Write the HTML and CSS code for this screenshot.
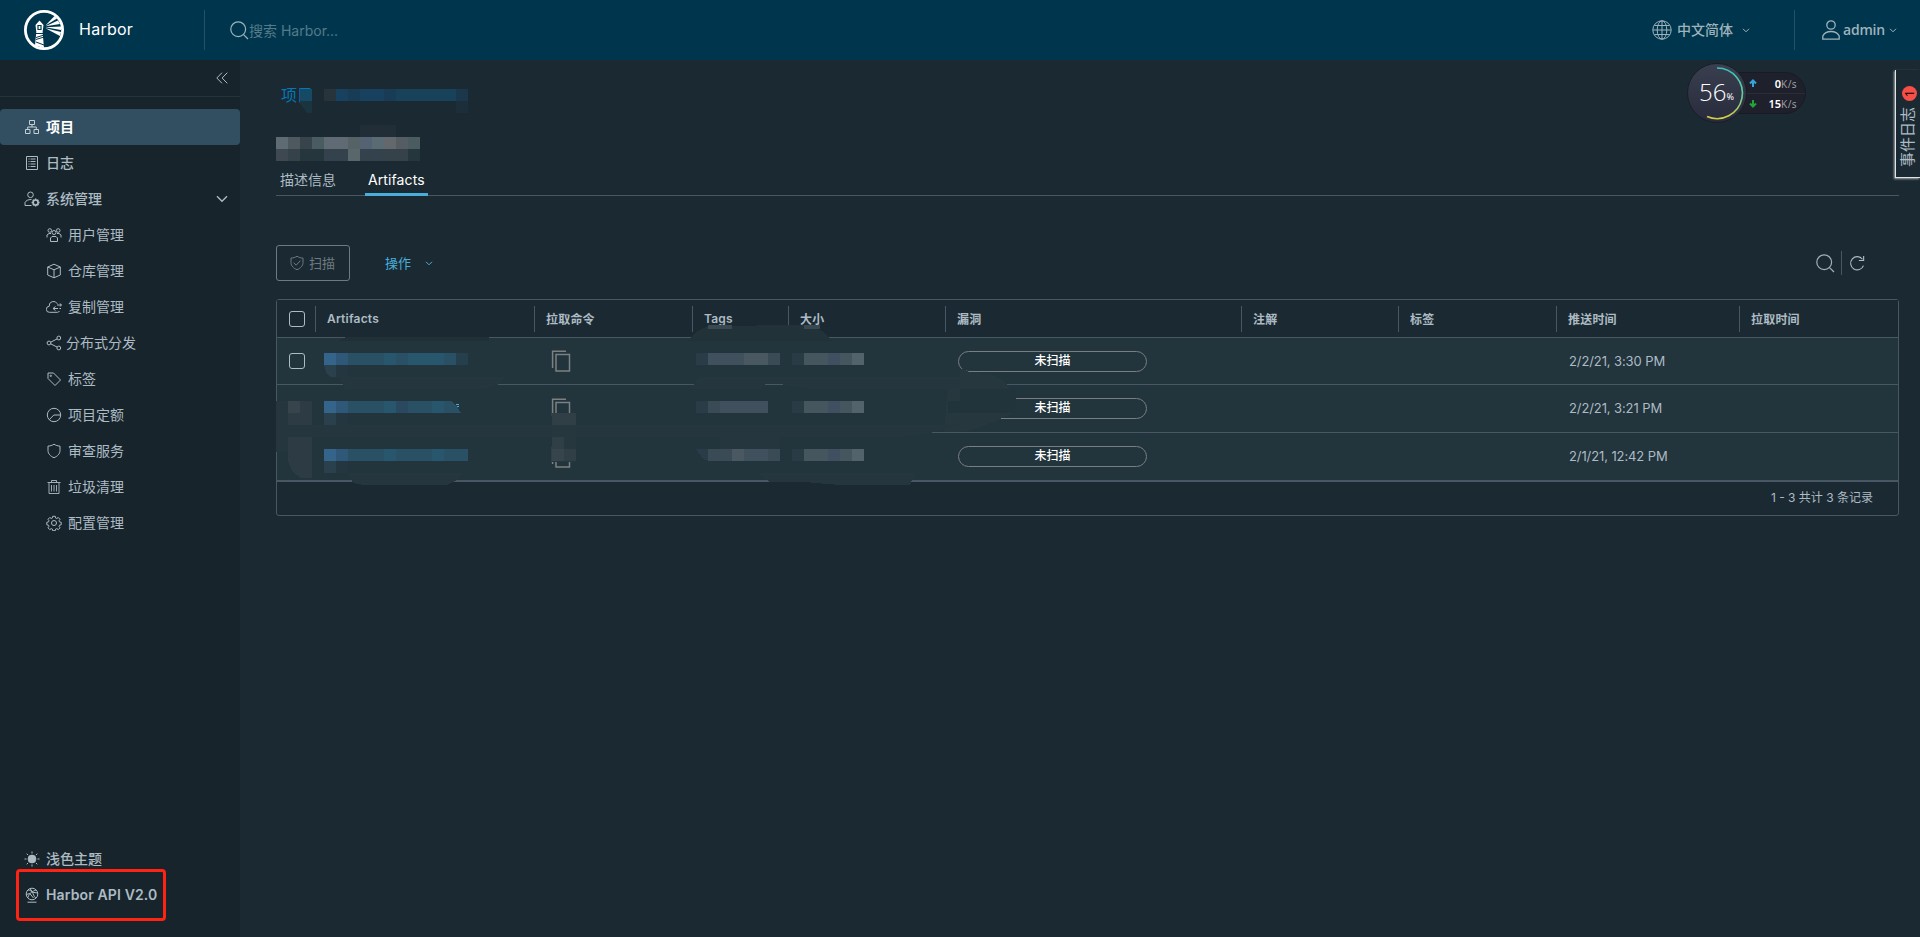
FILE: index.html
```html
<!DOCTYPE html>
<html lang="zh-CN">
<head>
    <meta charset="UTF-8">
    <meta name="viewport" content="width=device-width, initial-scale=1.0">
    <title>Harbor</title>
    <link rel="stylesheet" href="styles.css">
</head>
<body>

<!-- Header -->
<header class="header">
    <a class="brand">
        <svg class="logo" viewBox="0 0 40 40">
            <circle cx="20" cy="20" r="18.6" fill="none" stroke="#fff" stroke-width="2.8"/>
            <path d="M11.5 15 L15.5 10.5 L19.5 15 L18.6 22 L20 38 L11 35.5 L12.3 22 Z" fill="#fff"/>
            <path d="M14 15.5h3v4h-3z" fill="none" stroke="#00364d" stroke-width="1.2"/>
            <path d="M12 23.5h7.5M12 27.5l8-2.500M12 29.500l8-2.500M12 32l8 3" stroke="#00364d" stroke-width="1"/>
            <path d="M21.500 15.500 L30.500 6 L33 8.500 Z M21.500 16.300 L34 10.500 L36 14 Z M21.500 17.300 L37 16.500 L37 20 Z M21.500 18.300 L37 22 L36 26 Z" fill="#fff"/>
        </svg>
        <span class="brand-name">Harbor</span>
    </a>
    <div class="search">
        <svg class="icon-search" viewBox="0 0 19 19"><circle cx="8.200" cy="8.200" r="7.400"/><path d="M13.300 13.300l4.700 4.700"/></svg>
        <span>搜索 Harbor...</span>
    </div>
    <div class="header-actions">
        <div class="lang">
            <svg class="icon-globe" viewBox="0 0 20 20"><circle cx="10" cy="10" r="9.200"/><ellipse cx="10" cy="10" rx="4.800" ry="9.200"/><path d="M10 1v18M1 10h18M2.500 5.500h15M2.500 14.500h15"/></svg>
            <span>中文简体</span>
            <svg class="caret" viewBox="0 0 8 5"><path d="M1 .8l3 3 3-3"/></svg>
        </div>
        <div class="user">
            <svg class="icon-user" viewBox="0 0 18 20"><circle cx="9" cy="5" r="4.200"/><path d="M.8 19.200v-3.200c1.500-3 4.500-4.500 8.200-4.500s6.700 1.500 8.200 4.500v3.200z"/></svg>
            <span>admin</span>
            <svg class="caret" viewBox="0 0 8 5"><path d="M1 .8l3 3 3-3"/></svg>
        </div>
    </div>
</header>

<div class="main">
    <!-- Side navigation -->
    <nav class="sidenav">
        <div class="collapse">
            <svg viewBox="0 0 12 12"><path d="M6 .7L.8 6 6 11.300M11.300 .7L6.100 6l5.200 5.300"/></svg>
        </div>
        <ul class="nav-list">
            <li class="nav-item active">
                <svg viewBox="0 0 16 16"><path d="M5.500 1.500h5v4h-5zM1.500 10.500h4.500v4H1.500zM10 10.500h4.500v4H10zM8 5.500V8M3.700 10.500V8h8.600v2.500"/></svg>
                <span>项目</span>
            </li>
            <li class="nav-item">
                <svg viewBox="0 0 16 16"><path d="M2.500 1.500h11v13h-11zM4.500 4h1M6.500 4h5M4.500 6.500h1M6.500 6.500h5M4.500 9h1M6.500 9h5M4.500 11.500h1M6.500 11.500h5"/></svg>
                <span>日志</span>
            </li>
            <li class="nav-item">
                <svg viewBox="0 0 16 16"><circle cx="6.500" cy="3.800" r="2.800"/><path d="M7.500 14.500H1V11.500C2 9.500 4 8.500 7.500 8.500"/><circle cx="11.600" cy="11.500" r="2.500" stroke-width="1.700"/><path d="M11.600 7.500v1.500M11.600 14v1.500M7.600 11.500h1.500M14.100 11.500h1.500M8.800 8.700l1 1M13.400 13.300l1 1M14.400 8.700l-1 1M9.800 13.300l-1 1" stroke-width="1.400"/></svg>
                <span>系统管理</span>
                <svg class="expand" viewBox="0 0 12 8"><path d="M1 1.200l5 5 5-5"/></svg>
            </li>
        </ul>
        <ul class="nav-list sub">
            <li class="nav-item">
                <svg viewBox="0 0 16 16"><circle cx="8" cy="5.500" r="2"/><circle cx="3.800" cy="3.500" r="1.800"/><circle cx="12.200" cy="3.500" r="1.800"/><path d="M4.500 14.500V11L6 9.500h4l1.500 1.500v3.500zM1 10.500V8l2-1.500h2M15 10.500V8l-2-1.500h-2"/></svg>
                <span>用户管理</span>
            </li>
            <li class="nav-item">
                <svg viewBox="0 0 16 16"><path d="M8 1.200l6.300 2.800v8L8 14.800 1.700 12V4zM1.700 4L8 6.800 14.300 4M8 6.800v8"/></svg>
                <span>仓库管理</span>
            </li>
            <li class="nav-item">
                <svg viewBox="0 0 16 16"><path d="M13.500 12a2.500 2.500 0 0 1-2 1.300H3.500A3 3 0 0 1 3.200 7.300 4.300 4.300 0 0 1 11.300 4.800M7 9.500h5M9.500 7.500l-2.500 2 2.500 2M11 6h4.500M13.800 4.500L15.500 6l-1.700 1.500M13.500 9.500H15"/></svg>
                <span>复制管理</span>
            </li>
            <li class="nav-item tight">
                <svg viewBox="0 0 16 16"><circle cx="3" cy="8" r="1.900"/><circle cx="12.800" cy="3" r="1.900"/><circle cx="12.800" cy="13" r="1.900"/><path d="M4.700 7.200l6.400-3.300M4.700 8.800l6.400 3.300"/></svg>
                <span>分布式分发</span>
            </li>
            <li class="nav-item">
                <svg viewBox="0 0 16 16"><path d="M2 2h5.500l7 7L9 14.500l-7-7z"/><circle cx="4.800" cy="4.800" r=".7"/></svg>
                <span>标签</span>
            </li>
            <li class="nav-item">
                <svg viewBox="0 0 16 16"><circle cx="8" cy="8" r="6.700"/><path d="M3.300 12.700L7.800 8h6.800"/></svg>
                <span>项目定额</span>
            </li>
            <li class="nav-item">
                <svg viewBox="0 0 16 16"><path d="M8 1.200c1.800 1.200 3.800 1.800 6 1.900v4.400c0 3.300-2.500 5.800-6 7.200-3.500-1.400-6-3.900-6-7.200V3.100c2.200-.1 4.200-.7 6-1.900z"/></svg>
                <span>审查服务</span>
            </li>
            <li class="nav-item">
                <svg viewBox="0 0 16 16"><path d="M1.500 3.500h13M5.500 3.500v-2h5v2M3 4v10.500h10V4M5.500 6v6.500M8 6v6.500M10.500 6v6.500" stroke-width=".9"/></svg>
                <span>垃圾清理</span>
            </li>
            <li class="nav-item">
                <svg viewBox="0 0 16 16"><circle cx="8" cy="8" r="2.500"/><path d="M6.700 1.300h2.600l.4 1.800 1 .4 1.600-1 1.700 1.800-1 1.500.5 1.100 1.700.4v2.500l-1.700.4-.5 1 1 1.600-1.700 1.800-1.600-1-1 .4-.4 1.700H6.700l-.4-1.700-1-.4-1.600 1L2 12.800l1-1.600-.5-1-1.700-.4V7.300l1.700-.4.5-1.100-1-1.500 1.700-1.800 1.600 1 1-.4z"/></svg>
                <span>配置管理</span>
            </li>
        </ul>
        <ul class="nav-list nav-footer">
            <li class="nav-item">
                <svg viewBox="0 0 16 16"><circle cx="8" cy="8" r="3.900" fill="#adbbc4"/><path d="M8 .5v2M8 13.500v2M.5 8h2M13.500 8h2M2.700 2.700l1.400 1.400M11.900 11.900l1.400 1.400M13.300 2.700l-1.400 1.400M4.100 11.900l-1.400 1.400"/></svg>
                <span>浅色主题</span>
            </li>
            <li class="nav-item api">
                <svg viewBox="0 0 16 16"><circle cx="8" cy="7" r="5.800"/><path d="M4 3c2 0 4 1 5 3.500S11 11 12 11M12 3C9 4 5 6 4 10.500M2.300 7.500l3.500-1 3.700 4.500M6 1.800l3 3.500 4.700.7M3.500 15.200h9"/></svg>
                <span>Harbor API V2.0</span>
            </li>
        </ul>
    </nav>

    <!-- Content -->
    <main class="content">
        <div class="breadcrumb">项目</div>
        <div class="tabs">
            <span class="tab">描述信息</span>
            <span class="tab selected">Artifacts</span>
        </div>

        <div class="toolbar">
            <button class="btn-scan" disabled>
                <svg viewBox="0 0 16 16"><path d="M8 1.200c1.800 1.200 3.800 1.800 6 1.900v4.400c0 3.300-2.500 5.800-6 7.200-3.500-1.400-6-3.900-6-7.200V3.100c2.200-.1 4.200-.7 6-1.900zM4.700 7.700l2.400 2.500 4.300-4.500"/></svg>
                <span>扫描</span>
            </button>
            <div class="actions">
                <span>操作</span>
                <svg class="caret" viewBox="0 0 8 5"><path d="M1 .8l3 3 3-3"/></svg>
            </div>
            <div class="tools">
                <svg class="icon-search" viewBox="0 0 19 19"><circle cx="8.200" cy="8.200" r="7.400"/><path d="M13.300 13.300l4.700 4.700"/></svg>
                <svg class="icon-refresh" viewBox="0 0 18 18"><path d="M15.300 11.200A7 7 0 1 1 14.300 4.500M10.500 5.800h5V1"/></svg>
            </div>
        </div>

        <div class="datagrid">
            <div class="row head">
                <div class="cell check"><i class="box"></i></div>
                <div class="cell">Artifacts</div>
                <div class="cell">拉取命令</div>
                <div class="cell">Tags</div>
                <div class="cell">大小</div>
                <div class="cell">漏洞</div>
                <div class="cell">注解</div>
                <div class="cell">标签</div>
                <div class="cell">推送时间</div>
                <div class="cell">拉取时间</div>
            </div>
            <div class="row">
                <div class="cell check"><i class="box"></i></div>
                <div class="cell"></div>
                <div class="cell"><svg class="icon-copy" viewBox="0 0 20 22"><path d="M1.600 18V1.200H15M5 4.500h13.500v16.500H5z"/></svg></div>
                <div class="cell"></div>
                <div class="cell"></div>
                <div class="cell"><span class="scan-state">未扫描</span></div>
                <div class="cell"></div>
                <div class="cell"></div>
                <div class="cell date">2/2/21, 3:30 PM</div>
                <div class="cell"></div>
            </div>
            <div class="row">
                <div class="cell check"><i class="box"></i></div>
                <div class="cell"></div>
                <div class="cell"><svg class="icon-copy" viewBox="0 0 20 22"><path d="M1.600 18V1.200H15M5 4.500h13.500v16.500H5z"/></svg></div>
                <div class="cell"></div>
                <div class="cell"></div>
                <div class="cell"><span class="scan-state">未扫描</span></div>
                <div class="cell"></div>
                <div class="cell"></div>
                <div class="cell date">2/2/21, 3:21 PM</div>
                <div class="cell"></div>
            </div>
            <div class="row">
                <div class="cell check"><i class="box"></i></div>
                <div class="cell"></div>
                <div class="cell"><svg class="icon-copy" viewBox="0 0 20 22"><path d="M1.600 18V1.200H15M5 4.500h13.500v16.500H5z"/></svg></div>
                <div class="cell"></div>
                <div class="cell"></div>
                <div class="cell"><span class="scan-state">未扫描</span></div>
                <div class="cell"></div>
                <div class="cell"></div>
                <div class="cell date">2/1/21, 12:42 PM</div>
                <div class="cell"></div>
            </div>
            <div class="grid-footer">1 - 3 共计 3 条记录</div>
        </div>
    </main>
</div>

<!-- Mosaic brush over private values -->
<svg class="mosaic" viewBox="0 0 1920 937" shape-rendering="crispEdges">
    <!-- breadcrumb -->
    <path d="M300 89h12v24h-5l-7-11z" fill="#164a64"/>
    <path d="M300 101h12v12h-5l-7-10z" fill="#1a3440"/>
    <path d="M324 89h12v12h-12z" fill="#27343c"/>
    <path d="M336 89h12v12h-12zM360 89h24v12h-24z" fill="#18405f"/>
    <path d="M348 89h12v12h-12zM384 89h12v12h-12z" fill="#193c56"/>
    <path d="M396 89h60v12h-60z" fill="#18415a"/>
    <path d="M456 89h12v12h-12z" fill="#1b374b"/>
    <path d="M456 101h12v12h-12z" fill="#1d2e3b"/>
    <!-- title -->
    <path d="M360 125h36v12h-36z" fill="#212e38"/>
    <path d="M276 137h12v12h-12z" fill="#5f6b73"/>
    <path d="M288 137h12v12h-12z" fill="#4d585f"/>
    <path d="M300 137h12v12h-12z" fill="#38444c"/>
    <path d="M312 137h12v12h-12zM408 137h12v12h-12z" fill="#4b5c61"/>
    <path d="M324 137h24v12h-24z" fill="#606a74"/>
    <path d="M348 137h12v12h-12z" fill="#556266"/>
    <path d="M360 137h12v12h-12z" fill="#556274"/>
    <path d="M372 137h12v12h-12z" fill="#5a6b73"/>
    <path d="M384 137h12v12h-12z" fill="#62686b"/>
    <path d="M396 137h12v12h-12z" fill="#555d63"/>
    <path d="M276 149h12v12h-12z" fill="#3d4850"/>
    <path d="M288 149h12v12h-12zM384 149h24v12h-24z" fill="#36424a"/>
    <path d="M300 149h24v12h-24zM408 149h12v12h-12z" fill="#25363c"/>
    <path d="M324 149h24v12h-24zM360 149h24v12h-24z" fill="#33424d"/>
    <path d="M348 149h12v12h-12z" fill="#59666a"/>

    <!-- smudges between rows -->
    <path d="M346 337h143v4H338z" fill="#213037"/>
    <path d="M340 377h165l-8 8-14 4H345z" fill="#25363e"/>
    <path d="M688 341l8-9 12-6h24l50-1h24l16 6 10 10z" fill="#213238"/>
    <path d="M708 325h24v4h-24zM804 325h16v4h-16z" fill="#3a4852"/>
    <path d="M690 389l10-12h260v12H810l-30-5H765l-5 5z" fill="#25363e"/>
    <path d="M948 389h12v-21l12 5 18 1 14 7 8 11 4 12-4 9-16 8-24 9-16 2h-12z" fill="#26373e"/>
    <path d="M948 401h12v-12h56v24h-68z" fill="#22343b"/>
    <path d="M276 401h12v24h672l-30 8-30 4H288v15h-12z" fill="#25363e"/>
    <path d="M288 401h24v77h-11l-9-7-4-10z" fill="#2d3c44"/>
    <path d="M288 401h12v12h-12z" fill="#38444c"/>
    <path d="M288 425h24v12h-24z" fill="#25363e"/>
    <path d="M348 473h114l-5 7-10 5h-84l-10-2z" fill="#25363e"/>
    <path d="M758 473h157l-5 12H840l-35-3h-35z" fill="#26363e"/>

    <!-- artifact digests -->
    <path d="M324 353h12v12h-12zM324 401h12v12h-12zM324 449h12v12h-12z" fill="#34648a"/>
    <path d="M336 353h12v12h-12zM336 401h12v12h-12zM336 449h12v12h-12z" fill="#2f5878"/>
    <path d="M348 353h108v12H348zM348 401h103l5 4 5 8H348zM348 449h120v12H348z" fill="#295065"/>
    <path d="M384 353h12v12h-12zM408 353h36v12h-36zM384 401h12v12h-12zM432 401h12v12h-12zM384 449h12v12h-12zM432 449h12v12h-12z" fill="#28566c"/>
    <path d="M456 353h12v12h-12z" fill="#25404c"/>
    <path d="M396 401h12v12h-12z" fill="#2a4860"/>
    <path d="M456 404h3v1h-3zM457 406h2v1h-2z" fill="#49afd9"/>
    <path d="M324 365h12v12h-6l-4-5zM324 413h12v12h-12zM324 461h12v12h-12z" fill="#2a414d"/>
    <path d="M336 365h12v12h-12zM336 413h12v12h-12zM336 461h12v12h-12z" fill="#243741"/>

    <!-- copy icons -->
    <path d="M552 413h24v49h-24z" fill="#26373e"/>
    <path d="M552 413h24v12h-24zM552 437h12v12h-12zM564 449h12v12h-12z" fill="#303e45"/>
    <path d="M552 449h12v12h-12z" fill="#38444b"/>

    <!-- tags -->
    <path d="M696 353h12v12h-12zM696 401h12v12h-12zM696 449h12v12l-5-2z" fill="#293c48"/>
    <path d="M708 353h60v12h-60zM708 401h60v12h-60zM708 449h72v12h-72z" fill="#41505d"/>
    <path d="M744 353h24v12h-24zM732 449h12v12h-12z" fill="#4a5861"/>
    <path d="M768 353h12v12h-12zM708 401h12v12h-12zM708 449h24v12h-24zM768 449h12v12h-12z" fill="#3a4b55"/>
    <path d="M720 437h60v12h-60z" fill="#25363f"/>

    <!-- sizes -->
    <path d="M792 353h12v12h-12zM792 401h12v12h-12zM792 449h12v12h-12z" fill="#293c46"/>
    <path d="M804 353h48v12h-48zM804 401h48v12h-48zM804 449h48v12h-48z" fill="#46565f"/>
    <path d="M828 353h12v12h-12zM828 401h12v12h-12zM828 449h12v12h-12z" fill="#415061"/>
    <path d="M852 353h12v12h-12zM852 401h12v12h-12zM852 449h12v12h-12z" fill="#52636b"/>
</svg>

<!-- Floating network monitor -->
<div class="monitor">
    <div class="speeds">
        <div class="speed"><svg class="up" viewBox="0 0 8 8"><path d="M4 8V1.500M1 4.500l3-3 3 3"/></svg><b>0</b><small>K/s</small></div>
        <div class="speed"><svg class="down" viewBox="0 0 8 8"><path d="M4 0v6.500M1 3.500l3 3 3-3"/></svg><b>15</b><small>K/s</small></div>
    </div>
    <div class="gauge">
        <svg class="ring" viewBox="0 0 60 60">
            <defs>
                <linearGradient id="ringColor" x1="0" y1="0" x2="0" y2="1">
                    <stop offset="0" stop-color="#39c5bb"/>
                    <stop offset=".55" stop-color="#65cf9a"/>
                    <stop offset="1" stop-color="#d5cf42"/>
                </linearGradient>
            </defs>
            <path d="M30 5a25.300 25.300 0 1 1-10 48.500" fill="none" stroke="url(#ringColor)" stroke-width="1.600"/>
        </svg>
        <span class="percent">56</span><span class="sign">%</span>
    </div>
</div>

<!-- Event log tab -->
<div class="event-log">
    <span class="event-text">事件日志</span>
    <span class="event-badge">1</span>
</div>

<div class="api-mark"></div>

</body>
</html>
```
FILE: styles.css
```css
* {
    box-sizing: border-box;
    margin: 0;
    padding: 0;
}

body {
    height: 937px;
    overflow: hidden;
    display: flex;
    flex-direction: column;
    background: #1b2a32;
    color: #adbbc4;
    font-family: Inter, "Noto Sans CJK SC", sans-serif;
    font-size: 14px;
}

svg {
    flex: none;
    fill: none;
    stroke: currentColor;
}

/* Header */
.header {
    height: 60px;
    display: flex;
    align-items: center;
    background: #00364d;
}

.brand {
    width: 205px;
    height: 40px;
    padding-left: 24px;
    display: flex;
    align-items: center;
    gap: 15px;
    border-right: 1px solid #24506a;
    color: #fff;
}

.logo {
    width: 40px;
    height: 40px;
    stroke: none;
}

.brand-name {
    font-size: 16px;
    letter-spacing: .25px;
    line-height: 38px;
    margin-bottom: 2px;
}

.search {
    flex: 1;
    padding-left: 25px;
    display: flex;
    align-items: center;
    color: #557a8a;
}

.icon-search {
    width: 19px;
    height: 19px;
    stroke-width: 1.2;
    color: #9fb2bc;
}

.header-actions {
    display: flex;
    align-items: center;
    color: #9fb2bc;
}

.header-actions span {
    padding-bottom: 2px;
}

.lang {
    width: 143px;
    height: 40px;
    display: flex;
    align-items: center;
    border-right: 1px solid #24506a;
    font-weight: 500;
}

.icon-globe {
    width: 20px;
    height: 20px;
    margin-right: 5px;
}

.lang .caret {
    margin-left: 9px;
}

.caret {
    width: 8px;
    height: 5px;
}

.user {
    padding: 0 25px 0 27px;
    display: flex;
    align-items: center;
    font-family: "Open Sans", sans-serif;
    font-weight: 600;
}

.user span {
    letter-spacing: -.2px;
}

.icon-user {
    width: 18px;
    height: 20px;
    margin-right: 3px;
    stroke-width: 1.300;
}

.user .caret {
    margin-left: 4px;
    margin-right: -2px;
}

/* Side navigation */
.main {
    flex: 1;
    display: flex;
}

.sidenav {
    width: 240px;
    display: flex;
    flex-direction: column;
    background: #17242b;
}

.collapse {
    height: 37px;
    padding-right: 12px;
    display: flex;
    align-items: center;
    justify-content: flex-end;
    border-bottom: 1px solid #25333a;
}

.collapse svg {
    width: 12px;
    height: 12px;
}

.nav-list {
    list-style: none;
}

.collapse + .nav-list {
    margin-top: 12px;
}

.nav-item {
    height: 36px;
    padding: 0 12px 0 24px;
    display: flex;
    align-items: center;
    gap: 6px;
    font-weight: 500;
}

.nav-item span {
    padding-bottom: 2px;
}

.nav-item svg {
    width: 16px;
    height: 16px;
}

.nav-item .expand {
    width: 12px;
    height: 8px;
    margin-left: auto;
    stroke-width: 1.400;
}

.active {
    background: #324f62;
    border-radius: 4px;
    color: #fff;
    font-weight: 700;
}

.active svg {
    color: #c5d0d6;
}

.sub .nav-item {
    padding-left: 46px;
    font-weight: 400;
}

.sub .tight {
    gap: 4px;
}

.nav-footer {
    margin-top: auto;
    padding-bottom: 24px;
}

.api {
    font-weight: 600;
    letter-spacing: .13px;
}

/* Content */
.content {
    flex: 1;
    padding: 24px 21px 0 36px;
}

.breadcrumb {
    height: 84px;
    padding-left: 5px;
    line-height: 22px;
    color: #0079b8;
    font-size: 16px;
}

.tabs {
    height: 28px;
    padding-left: 4px;
    display: flex;
    gap: 29px;
    border-bottom: 1px solid #485764;
    line-height: 24px;
}

.tab.selected {
    height: 28px;
    padding: 0 3px;
    color: #fff;
    letter-spacing: .1px;
    box-shadow: inset 0 -3px #49afd9;
}

.toolbar {
    height: 36px;
    margin: 49px 0 18px;
    display: flex;
    align-items: center;
}

.btn-scan {
    width: 74px;
    height: 36px;
    padding: 0 2px 1px 0;
    display: flex;
    align-items: center;
    justify-content: center;
    gap: 4px;
    background: none;
    border: 1px solid #6f7a80;
    border-radius: 3px;
    color: #6f7a80;
    font: 13px "Noto Sans CJK SC", sans-serif;
}

.btn-scan svg {
    width: 16px;
    height: 16px;
}

.actions {
    margin-left: 35px;
    display: flex;
    align-items: center;
    gap: 14px;
    color: #49afd9;
    font-size: 13px;
}

.actions span {
    padding-bottom: 2px;
}

.tools {
    margin-left: auto;
    padding-right: 33px;
    display: flex;
    align-items: center;
}

.tools .icon-search {
    margin-right: 6px;
}

.icon-refresh {
    width: 25px;
    height: 24px;
    padding: 4px 0 3px 7px;
    border-left: 1px solid #485764;
    stroke-width: 1.200;
}

/* Datagrid */
.datagrid {
    height: 217px;
    border: 1px solid #485764;
    border-radius: 3px;
    font-size: 13px;
}

.row {
    height: 48px;
    display: grid;
    grid-template-columns: 38px 219px 158px 96px 157px 296px 157px 158px 183px 1fr;
    align-items: center;
    background: #22343c;
    border-bottom: 1px solid #485764;
}

.head {
    height: 38px;
    background: #1b2a32;
    font-size: 12px;
    font-weight: 600;
}

.head + .row {
    height: 47px;
}

.cell {
    padding-left: 13px;
    display: flex;
    align-items: center;
}

.cell.date {
    padding-bottom: 1px;
    letter-spacing: -.1px;
}

.head .cell {
    height: 26px;
    border-left: 1px solid #485764;
    padding-left: 11px;
    letter-spacing: .2px;
}

.cell.check,
.head .cell.check {
    border: none;
    padding-left: 12px;
}

.box {
    width: 16px;
    height: 16px;
    border: 1px solid #adbbc4;
    border-radius: 3px;
}

.icon-copy {
    width: 20px;
    height: 22px;
    margin-left: 4px;
    color: #7c8080;
    stroke-width: 1.500;
}

.scan-state {
    width: 189px;
    height: 21px;
    border: 1px solid #7b7e80;
    border-radius: 11px;
    color: #fff;
    font-size: 12px;
    font-weight: 500;
    line-height: 17px;
    text-align: center;
}

.grid-footer {
    height: 34px;
    padding-right: 25px;
    border-top: 1px solid #485764;
    line-height: 32px;
    text-align: right;
    font-size: 12px;
}

.mosaic {
    position: absolute;
    top: 0;
    left: 0;
    width: 1920px;
    height: 937px;
    stroke: none;
    pointer-events: none;
}

/* Network monitor */
.monitor {
    position: absolute;
    top: 63px;
    left: 1687px;
    display: flex;
    align-items: center;
    font-family: "Noto Sans", sans-serif;
}

.gauge {
    width: 60px;
    height: 60px;
    padding: 0 0 3px 11px;
    order: -1;
    display: flex;
    align-items: center;
    background: linear-gradient(#3a3f4f, #272b3b);
    border: 1px solid #1a1d29;
    border-radius: 50%;
    color: #fff;
    z-index: 1;
}

.ring {
    position: absolute;
    top: 0;
    left: 0;
    width: 60px;
    height: 60px;
}

.percent {
    font-family: "Open Sans", sans-serif;
    font-size: 24px;
    font-weight: 300;
}

.sign {
    padding-top: 9px;
    font-size: 9px;
}

.speeds {
    width: 74px;
    height: 42px;
    margin-left: -15px;
    background: #1e202c;
    border: 1px solid #181b25;
    border-radius: 0 21px 21px 0;
}

.speed {
    height: 20px;
    padding: 0 8px 0 16px;
    display: flex;
    align-items: center;
    color: #9b9da3;
}

.speed + .speed {
    border-top: 1px solid #2a2d38;
}

.speed svg {
    width: 8px;
    height: 8px;
    margin-right: auto;
    stroke-width: 2;
}

.speed b {
    color: #fff;
    font-size: 11px;
    font-weight: 600;
}

.speed small {
    padding-top: 1px;
    font-size: 10px;
    letter-spacing: .4px;
}

.up {
    color: #35a3e0;
}

.down {
    color: #24a338;
}

/* Event log */
.event-log {
    position: absolute;
    top: 70px;
    right: 0;
    width: 25px;
    height: 108px;
    padding-bottom: 10px;
    display: flex;
    flex-direction: column-reverse;
    align-items: center;
    gap: 6px;
    background: #1b2a32;
    border-left: 1px solid #dfe4e6;
    border-bottom: 1px solid #dfe4e6;
    box-shadow: -1px 1px 2px #a0a6a9;
}

.event-text {
    writing-mode: vertical-rl;
    transform: rotate(180deg);
    text-orientation: sideways;
    font-size: 15px;
    line-height: 24px;
}

.event-badge {
    width: 15px;
    height: 15px;
    margin-left: 2px;
    border-radius: 50%;
    background: #f54f47;
    color: #000;
    font-family: "Open Sans", sans-serif;
    font-size: 12px;
    line-height: 15px;
    text-align: center;
    transform: rotate(-90deg);
}

/* Red frame around the API link */
.api-mark {
    position: absolute;
    top: 869px;
    left: 16px;
    width: 150px;
    height: 52px;
    border: 3px solid #ff2313;
    border-radius: 4px;
}
```
